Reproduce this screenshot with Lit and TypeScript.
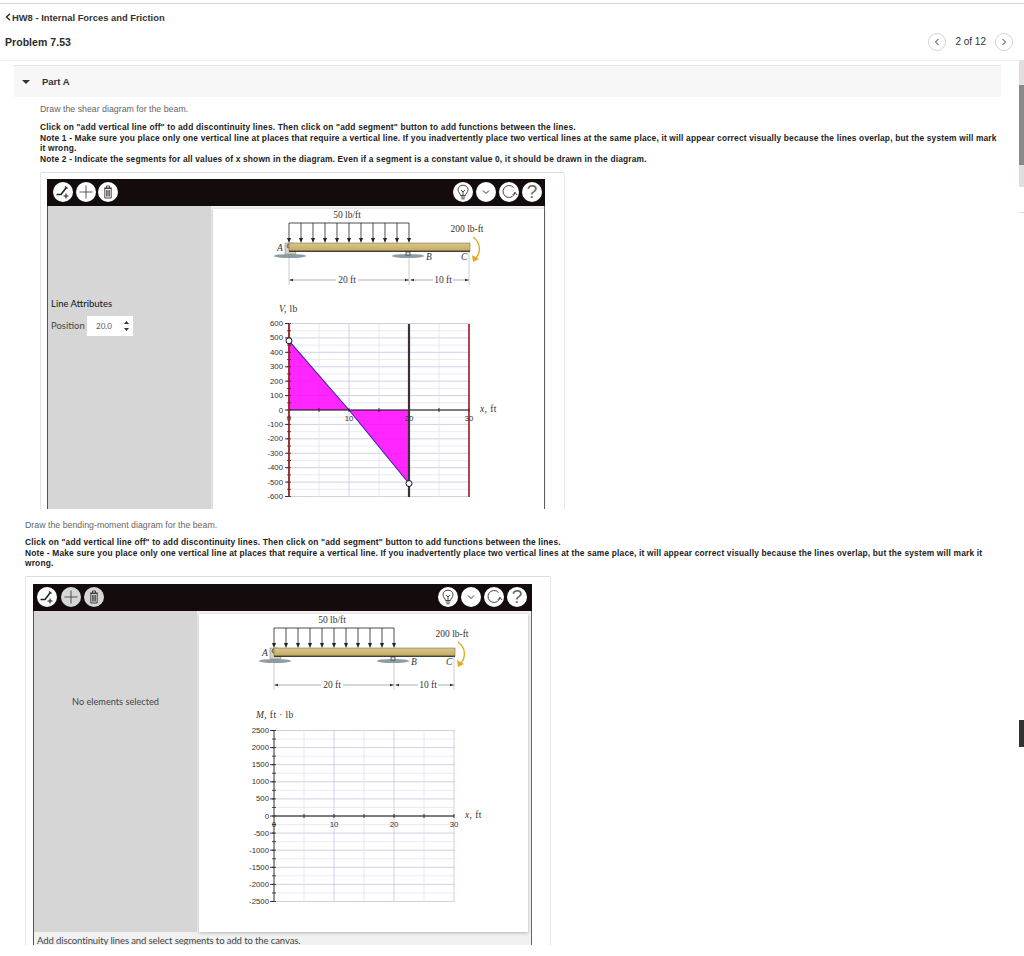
import { LitElement, html, svg, css } from "lit";
import { customElement } from "lit/decorators.js";

interface PlotConfig {
  yLabel: unknown;
  top: number;
  bottom: number;
  zero: number;
  ticks: number[];
  minor: number;
  labelX: number;
  xLabelDy: number;
  shear: boolean;
}

const shearPlot: PlotConfig = {
  yLabel: svg`<tspan font-style="italic">V,</tspan> lb`,
  top: 81,
  bottom: 254,
  zero: 167,
  ticks: [600, 500, 400, 300, 200, 100, 0, -100, -200, -300, -400, -500, -600],
  minor: 50,
  labelX: -6,
  xLabelDy: 11,
  shear: true,
};

const momentPlot: PlotConfig = {
  yLabel: svg`<tspan font-style="italic">M,</tspan> ft · lb`,
  top: 82,
  bottom: 253,
  zero: 168,
  ticks: [2500, 2000, 1500, 1000, 500, 0, -500, -1000, -1500, -2000, -2500],
  minor: 250,
  labelX: -5,
  xLabelDy: 11,
  shear: false,
};

const beam = () => svg`
  <defs>
    <linearGradient id="wood" x1="0" y1="0" x2="0" y2="1">
      <stop offset="0" stop-color="#d8c88c" />
      <stop offset="1" stop-color="#c4aa62" />
    </linearGradient>
  </defs>
  <text class="serif" x="58" y="-25" text-anchor="middle">50 lb/ft</text>
  <text class="serif" x="178" y="-11" text-anchor="middle">200 lb-ft</text>
  <path d="M0 -20H120" stroke="#222" stroke-width="0.8" fill="none" />
  ${Array.from({ length: 11 }, (_, i) => {
    const x = i * 12;
    return svg`
      <path d="M${x} -20V-3" stroke="#222" stroke-width="0.8" />
      <path d="M${x - 2} -5L${x} 0L${x + 2} -5Z" fill="#222" />
    `;
  })}
  <path d="M0 15V42M120 15V42M180 9V42" stroke="#b8b8b8" stroke-width="0.7" fill="none" />
  <ellipse cx="1" cy="13" rx="16" ry="2" fill="#8d9ca3" />
  <ellipse cx="119" cy="13" rx="16" ry="2" fill="#8d9ca3" />
  <path d="M-4 11V0H4L7 11Z" fill="#d9d4c2" stroke="#777" stroke-width="0.5" />
  <circle cx="0" cy="3" r="2" fill="#c0a95f" stroke="#333" stroke-width="0.6" />
  <rect x="117" y="9" width="4" height="3" fill="#eee" stroke="#222" stroke-width="0.7" />
  <rect x="0" y="0" width="181" height="8" fill="url(#wood)" stroke="#6a5d32" stroke-width="0.5" />
  <path d="M0 8.3H181" stroke="#1c1c1c" stroke-width="1" />
  <text class="serif ital big" x="-12" y="8">A</text>
  <text class="serif ital" x="137" y="17">B</text>
  <text class="serif ital" x="172" y="17">C</text>
  <path d="M184 -6C192 0 192 9 187 15" stroke="#e0ab24" stroke-width="1.4" fill="none" />
  <path d="M183 12L190 16L184 19Z" fill="#e0ab24" />
  <path d="M1 37H120M122 37H180" stroke="#777" stroke-width="0.6" />
  <path d="M0 37l4 -1.2v2.4ZM120 37l-4 -1.2v2.4ZM121 37l4 -1.2v2.4ZM180 37l-4 -1.2v2.4Z" fill="#333" />
  <rect x="47" y="32" width="22" height="10" fill="#fff" />
  <rect x="144" y="32" width="20" height="10" fill="#fff" />
  <text class="serif" x="58" y="40" text-anchor="middle">20 ft</text>
  <text class="serif" x="154" y="40" text-anchor="middle">10 ft</text>
`;

const plot = (c: PlotConfig) => {
  const span = c.ticks[0] * 2;
  const scale = (c.bottom - c.top) / span;
  const yOf = (v: number) => c.zero - v * scale;
  const minors: number[] = [];
  for (let v = -c.ticks[0]; v <= c.ticks[0]; v += c.minor) minors.push(v);
  const shear = c.shear
    ? svg`
        <path d="M0 ${yOf(480)}L60 ${c.zero}H0ZM60 ${c.zero}H120V${yOf(-510)}Z" fill="#ff00ff" fill-opacity="0.85" />
        <path d="M0 ${yOf(480)}L60 ${c.zero}L120 ${yOf(-510)}" stroke="#3c22a8" stroke-width="1.1" fill="none" />
      `
    : "";
  const lines = c.shear
    ? svg`
        <path d="M0 ${c.top}V${c.bottom}M180 ${c.top}V${c.bottom}" stroke="#a51f1f" stroke-width="1.6" fill="none" />
        <path d="M120 ${c.top}V${c.bottom}" stroke="#3c3236" stroke-width="2.2" fill="none" />
        <circle cx="0" cy="${yOf(480)}" r="3" fill="#fff" stroke="#111" stroke-width="1" />
        <circle cx="120" cy="${yOf(-510)}" r="3" fill="#fff" stroke="#111" stroke-width="1" />
      `
    : "";
  return svg`
    <text class="serif big" x="${c.shear ? -10 : -18}" y="${c.top - 12}" xml:space="preserve">${c.yLabel}</text>
    ${minors.map(
      (v) => svg`<path d="M0 ${yOf(v)}H181" stroke="${v % (c.ticks[0] - c.ticks[1]) === 0 ? "#c3c5e2" : "#e4e5f3"}" stroke-width="0.8" />`,
    )}
    ${[5, 10, 15, 20, 25, 30].map(
      (f) => svg`<path d="M${f * 6} ${c.top}V${c.bottom}" stroke="${f % 10 === 0 ? "#c3c5e2" : "#dfe0f1"}" stroke-width="0.8" />`,
    )}
    ${shear}
    <path d="M0 ${c.zero}H180" stroke="#111" stroke-width="1" />
    <path d="M0 ${c.top}V${c.bottom}" stroke="#333" stroke-width="1" />
    ${[5, 10, 15, 20, 25, 30].map((f) => svg`<path d="M${f * 6} ${c.zero - 2}v4" stroke="#111" stroke-width="0.8" />`)}
    ${minors.map((v) => svg`<path d="M-2 ${yOf(v)}H2" stroke="#222" stroke-width="0.8" />`)}
    ${c.ticks.map(
      (v) => svg`
        <path d="M-4 ${yOf(v)}H0" stroke="#222" stroke-width="0.9" />
        <text class="tick" x="${c.labelX}" y="${yOf(v) + 2.5}" text-anchor="end">${v}</text>
      `,
    )}
    ${[0, 10, 20, 30].map(
      (f) => svg`<text class="tick" x="${f * 6}" y="${c.zero + c.xLabelDy}" text-anchor="middle">${f}</text>`,
    )}
    ${lines}
    <text class="serif big" x="191" y="${c.zero + 2}"><tspan font-style="italic">x,</tspan> ft</text>
  `;
};

const icons = {
  line: svg`<path d="M3.5 12.5H8L13 6" fill="none" stroke="#222" stroke-width="1.6" /><path d="M12 4.5L14.5 6.5" stroke="#222" stroke-width="1.4" /><path d="M13 11.5V16.5M10.5 14H15.5" stroke="#222" stroke-width="1.1" />`,
  plus: svg`<path d="M10 3.5V16.5M3.5 10H16.5" stroke="#444" stroke-width="0.9" />`,
  trash: svg`<path d="M6.8 6.5H13.2V16H6.8ZM6 6H14M8.5 6V4H11.5V6M8.7 8V14.5M10 8V14.5M11.3 8V14.5" fill="none" stroke="#333" stroke-width="0.9" />`,
  bulb: svg`<path d="M7.5 13.5C7.5 11.5 5 10.5 5 7.6C5 5 7.2 3.2 10 3.2C12.8 3.2 15 5 15 7.6C15 10.5 12.5 11.5 12.5 13.5ZM7.8 15H12.2M8.4 16.8H11.6M8 8L10 10L12 8M10 10V13" fill="none" stroke="#333" stroke-width="0.9" />`,
  chevron: svg`<path d="M7 8.5L10 11.5L13 8.5" fill="none" stroke="#333" stroke-width="1" />`,
  redo: svg`<path d="M14.5 5.5A6 6 0 1 0 16 10" fill="none" stroke="#333" stroke-width="0.9" /><path d="M16 10.5L13.6 13M16 10.5L18 13" fill="none" stroke="#333" stroke-width="0.9" />`,
};

@customElement("sketch-pad")
export class SketchPad extends LitElement {
  static properties = {
    variant: { type: String },
  };

  declare variant: string;

  static styles = css`
    :host {
      display: block;
      overflow: hidden;
      box-sizing: border-box;
      border-top: 1px solid #ddd;
      border-left: 1px solid #e6e6e6;
      border-right: 1px solid #e6e6e6;
      border-radius: 2px 2px 0 0;
      padding-top: 6px;
      font-family: Lato, "Liberation Sans", sans-serif;
      color: #222;
    }

    .toolbar {
      height: 27px;
      background: #140c0c;
      display: flex;
      align-items: center;
      padding: 0 3px 0 6px;
      gap: 2.5px;
      box-sizing: border-box;
    }

    .spacer {
      flex: 1;
    }

    .btn {
      width: 20px;
      height: 20px;
      border-radius: 50%;
      background: #fff;
      display: flex;
      align-items: center;
      justify-content: center;
      font-family: "Liberation Sans", sans-serif;
      font-size: 19px;
      line-height: 20px;
      color: #666;
      flex: none;
    }

    .btn.off {
      background: #d6d6d6;
    }

    .btn svg {
      width: 20px;
      height: 20px;
      display: block;
    }

    .right {
      display: flex;
      gap: 3px;
    }

    .body {
      display: grid;
      grid-template-columns: 164px 1fr;
      gap: 2px;
      background: #f1f1f1;
      border-right: 1px solid #666;
    }

    .panel {
      background: #d6d6d6;
      border-left: 1px solid #555;
      font-size: 9.5px;
    }

    .canvas {
      margin-top: 3px;
      background: #fff;
      box-shadow: 0 1px 3px rgba(0, 0, 0, 0.25);
    }

    .canvas svg {
      display: block;
      width: 100%;
      height: 100%;
    }

    .attrs {
      padding: 92px 0 0 3px;
    }

    .attrs .title {
      line-height: 12px;
      color: #111;
    }

    .attrs .row {
      margin-top: 6px;
      display: flex;
      align-items: center;
      color: #444;
    }

    .attrs .label {
      width: 36px;
    }

    .field {
      width: 46px;
      height: 20px;
      background: #fff;
      box-sizing: border-box;
      display: flex;
      align-items: center;
      justify-content: space-between;
      padding: 0 4px 0 9px;
      font-size: 8px;
      color: #555;
    }

    .spin {
      width: 5px;
      height: 12px;
      display: block;
    }

    .empty {
      padding-top: 85px;
      text-align: center;
      font-size: 9.2px;
      line-height: 12px;
      color: #444;
    }

    .footer {
      background: #f1f1f1;
      border-left: 1px solid #555;
      border-right: 1px solid #666;
      padding: 2px 0 0 3px;
      font-size: 9.5px;
      line-height: 14px;
      letter-spacing: -0.1px;
      color: #444;
    }

    :host([variant="shear"]) .toolbar,
    :host([variant="shear"]) .body {
      width: 498px;
      margin-left: 6px;
      box-sizing: border-box;
    }

    :host([variant="shear"]) .body {
      height: 303px;
    }

    :host([variant="moment"]) {
      padding-top: 7px;
    }

    :host([variant="moment"]) .toolbar,
    :host([variant="moment"]) .body,
    :host([variant="moment"]) .footer {
      width: 499px;
      margin-left: 7px;
      box-sizing: border-box;
    }

    :host([variant="moment"]) .toolbar {
      padding: 0 5px 0 4px;
      gap: 3.5px;
    }

    :host([variant="moment"]) .body {
      grid-template-columns: 164px 329px;
      height: 321px;
    }

    text {
      font-family: "Liberation Sans", sans-serif;
      fill: #222;
    }

    .serif {
      font-family: "Liberation Serif", serif;
      font-size: 9.5px;
      fill: #333;
    }

    .serif.big {
      font-size: 9.5px;
      letter-spacing: 0.4px;
    }

    .ital {
      font-style: italic;
    }

    .tick {
      font-size: 7.8px;
      fill: #333;
    }
  `;

  private button(icon: unknown, off = false) {
    return html`<span class="btn ${off ? "off" : ""}"><svg viewBox="0 0 20 20">${icon}</svg></span>`;
  }

  render() {
    const shear = this.variant === "shear";
    return html`
      <div class="toolbar">
        ${this.button(icons.line)} ${this.button(icons.plus, !shear)} ${this.button(icons.trash, !shear)}
        <span class="spacer"></span>
        <div class="right">
          ${this.button(icons.bulb)} ${this.button(icons.chevron)} ${this.button(icons.redo)}
          <span class="btn">?</span>
        </div>
      </div>
      <div class="body">
        <div class="panel">
          ${shear
            ? html`<div class="attrs">
                <div class="title">Line Attributes</div>
                <div class="row">
                  <span class="label">Position</span>
                  <span class="field">
                    20.0
                    <svg class="spin" viewBox="0 0 5 12"><path d="M0 4L2.5 1L5 4ZM0 8L2.5 11L5 8Z" fill="#333" /></svg>
                  </span>
                </div>
              </div>`
            : html`<div class="empty">No elements selected</div>`}
        </div>
        <div class="canvas">
          <svg viewBox="0 0 ${shear ? 331 : 329} ${shear ? 300 : 318}" preserveAspectRatio="xMinYMin">
            <g transform="translate(${shear ? 76 : 75} 34)">${beam()}${plot(shear ? shearPlot : momentPlot)}</g>
          </svg>
        </div>
      </div>
      ${shear ? "" : html`<div class="footer">Add discontinuity lines and select segments to add to the canvas.</div>`}
    `;
  }
}

@customElement("app-root")
export class AppRoot extends LitElement {
  static styles = css`
    :host {
      display: block;
      position: relative;
      width: 1024px;
      height: 956px;
      overflow: hidden;
      background: #fff;
      font-family: "Liberation Sans", Arial, sans-serif;
      color: #222;
    }

    .topline {
      margin-top: 3px;
      height: 1px;
      background: #d9d9d9;
    }

    .crumb {
      margin-top: 7px;
      padding-left: 5px;
      display: flex;
      align-items: center;
      gap: 1px;
      height: 12px;
      font-size: 9.4px;
      font-weight: bold;
      color: #333;
    }

    .crumb svg {
      width: 6px;
      height: 8px;
    }

    .head {
      height: 38px;
      box-sizing: border-box;
      padding: 0 11px 0 5px;
      display: flex;
      align-items: center;
      justify-content: space-between;
      border-bottom: 1px solid #eee;
    }

    .head h1 {
      margin: 0;
      font-size: 10.5px;
      font-weight: bold;
      color: #2a2a2a;
      letter-spacing: 0.05px;
    }

    .pager {
      display: flex;
      align-items: center;
      gap: 9px;
      font-size: 10px;
      color: #333;
    }

    .circle {
      width: 18px;
      height: 18px;
      border: 1px solid #d4d4d4;
      border-radius: 50%;
      box-sizing: border-box;
      display: flex;
      align-items: center;
      justify-content: center;
    }

    .circle svg {
      width: 8px;
      height: 8px;
    }

    .part {
      margin: 4px 23px 0 14px;
      height: 32px;
      background: #f7f7f7;
      border-top: 1px solid #e4e4e4;
      box-sizing: border-box;
      display: flex;
      align-items: center;
      padding-left: 8px;
      gap: 12px;
      font-size: 9.5px;
      font-weight: bold;
      color: #333;
    }

    .tri {
      width: 0;
      height: 0;
      border-left: 4px solid transparent;
      border-right: 4px solid transparent;
      border-top: 4px solid #333;
    }

    .section-a {
      padding: 7px 23px 0 40px;
    }

    .section-b {
      padding: 11px 40px 0 25px;
    }

    .intro {
      font-size: 8.8px;
      line-height: 11px;
      color: #666;
      margin: 0 0 7px;
    }

    .section-b .intro {
      margin-bottom: 6px;
    }

    .notes {
      font-size: 8.4px;
      line-height: 10.6px;
      font-weight: bold;
      color: #222;
      margin: 0;
      letter-spacing: 0.175px;
    }

    .pad-a {
      margin-top: 7.6px;
      width: 525px;
      height: 337px;
    }

    .pad-b {
      margin-top: 7.2px;
      width: 526px;
      height: 369px;
    }

    .scroll {
      position: absolute;
      right: 0;
      top: 60px;
      width: 5px;
      height: 127px;
      background: #e2dede;
    }

    .scroll::before {
      content: "";
      position: absolute;
      left: 0;
      right: 0;
      top: 25px;
      height: 80px;
      background: #8a8a8a;
    }

    .mark {
      position: absolute;
      right: 0;
      top: 720px;
      width: 5px;
      height: 27px;
      background: #333;
    }

    .tickline {
      position: absolute;
      right: 0;
      top: 212px;
      width: 5px;
      height: 1px;
      background: #ddd;
    }
  `;

  render() {
    return html`
      <div class="topline"></div>
      <div class="crumb">
        <svg viewBox="0 0 6 8"><path d="M5 0.8L1.5 4L5 7.2" fill="none" stroke="#222" stroke-width="1.3" /></svg>
        HW8 - Internal Forces and Friction
      </div>
      <header class="head">
        <h1>Problem 7.53</h1>
        <div class="pager">
          <span class="circle"><svg viewBox="0 0 8 8"><path d="M5.5 1L2.5 4L5.5 7" fill="none" stroke="#333" /></svg></span>
          <span>2 of 12</span>
          <span class="circle"><svg viewBox="0 0 8 8"><path d="M2.5 1L5.5 4L2.5 7" fill="none" stroke="#333" /></svg></span>
        </div>
      </header>
      <div class="part"><span class="tri"></span><span>Part A</span></div>
      <section class="section-a">
        <p class="intro">Draw the shear diagram for the beam.</p>
        <p class="notes">
          Click on "add vertical line off" to add discontinuity lines. Then click on "add segment" button to add functions between the lines.<br />
          Note 1 - Make sure you place only one vertical line at places that require a vertical line. If you inadvertently place two vertical lines at the same place, it will appear correct visually because the lines overlap, but the system will mark<br />
          it wrong.<br />
          Note 2 - Indicate the segments for all values of x shown in the diagram. Even if a segment is a constant value 0, it should be drawn in the diagram.
        </p>
        <sketch-pad class="pad-a" variant="shear"></sketch-pad>
      </section>
      <section class="section-b">
        <p class="intro">Draw the bending-moment diagram for the beam.</p>
        <p class="notes">
          Click on "add vertical line off" to add discontinuity lines. Then click on "add segment" button to add functions between the lines.<br />
          Note - Make sure you place only one vertical line at places that require a vertical line. If you inadvertently place two vertical lines at the same place, it will appear correct visually because the lines overlap, but the system will mark it<br />
          wrong.
        </p>
        <sketch-pad class="pad-b" variant="moment"></sketch-pad>
      </section>
      <div class="scroll"></div>
      <div class="tickline"></div>
      <div class="mark"></div>
    `;
  }
}
